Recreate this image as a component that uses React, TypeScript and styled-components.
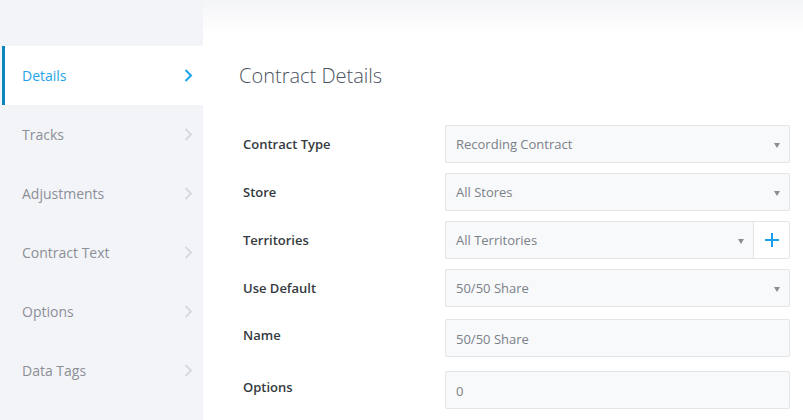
import styled, { createGlobalStyle, css } from 'styled-components';

const GlobalStyle = createGlobalStyle`
  html, body {
    margin: 0;
    padding: 0;
    background: #fff;
    font-family: 'Open Sans', 'Liberation Sans', sans-serif;
  }
  * {
    box-sizing: border-box;
  }
`;

const Page = styled.div`
  display: flex;
  width: 100%;
  height: 100vh;
  overflow: hidden;
  background: #fff;
`;

const Sidebar = styled.nav`
  width: 203px;
  flex-shrink: 0;
  background: #f3f4f8;
  padding-top: 46px;
  display: flex;
  flex-direction: column;
`;

const NavItem = styled.div<{ $active?: boolean }>`
  height: 59px;
  display: flex;
  align-items: center;
  justify-content: space-between;
  padding: 0 10px 0 22px;
  font-size: 14px;
  color: #8b8f97;
  ${props =>
    props.$active &&
    css`
      background: #fff;
      color: #25a3ea;
      box-shadow: inset 2px 0 0 #f3f4f8, inset 5px 0 0 #0b87bd;
    `};
`;

const Main = styled.main`
  flex: 1;
  padding: 62px 13px 0 36px;
  background: linear-gradient(to bottom, #f4f5f8 0px, #fbfbfc 22px, #fff 34px);
`;

const Title = styled.h1`
  margin: 0 0 35px;
  font-size: 20px;
  line-height: 28px;
  font-weight: 300;
  color: #4a5360;
`;

const Form = styled.div`
  display: flex;
  flex-direction: column;
`;

const Row = styled.div<{ $space: number }>`
  display: flex;
  align-items: center;
  margin-top: ${props => props.$space}px;
`;

const Label = styled.label<{ $shift?: number }>`
  width: 206px;
  flex-shrink: 0;
  padding-left: 4px;
  font-size: 13px;
  font-weight: 600;
  color: #343a40;
  position: relative;
  top: ${props => props.$shift || 0}px;
`;

const Control = styled.div`
  flex: 1;
  height: 38px;
  display: flex;
  border: 1px solid #e3e5e9;
  border-radius: 2px;
  background: #f8f9fb;
`;

const Value = styled.div<{ $text?: boolean }>`
  flex: 1;
  display: flex;
  align-items: center;
  justify-content: space-between;
  padding: ${props => (props.$text ? '2px' : '0')} 9px 0 10px;
  font-size: 13px;
  color: #7b8088;
`;

const Caret = styled.span`
  width: 0;
  height: 0;
  border-left: 3.5px solid transparent;
  border-right: 3.5px solid transparent;
  border-top: 5px solid #8a8d92;
  margin-top: 2px;
`;

const AddButton = styled.button`
  width: 36px;
  border: none;
  border-left: 1px solid #e3e5e9;
  background: #fff;
  padding: 0;
  display: flex;
  align-items: center;
  justify-content: center;
  cursor: pointer;
`;

const Chevron = ({ color }: { color: string }) => (
  <svg width="9" height="13" viewBox="0 0 9 13">
    <path d="M1.5 1 L7 6.5 L1.5 12" fill="none" stroke={color} strokeWidth="2" />
  </svg>
);

const NAV = ['Details', 'Tracks', 'Adjustments', 'Contract Text', 'Options', 'Data Tags'];

type FieldType = {
  label: string;
  value: string;
  select?: boolean;
  add?: boolean;
  space: number;
  shift?: number;
};

const FIELDS: FieldType[] = [
  { label: 'Contract Type', value: 'Recording Contract', select: true, space: 0 },
  { label: 'Store', value: 'All Stores', select: true, space: 10 },
  { label: 'Territories', value: 'All Territories', select: true, add: true, space: 10 },
  { label: 'Use Default', value: '50/50 Share', select: true, space: 10 },
  { label: 'Name', value: '50/50 Share', space: 12, shift: -3 },
  { label: 'Options', value: '0', space: 14, shift: -3 },
];

export default function App() {
  return (
    <Page>
      <GlobalStyle />
      <Sidebar>
        {NAV.map((item, i) => (
          <NavItem key={item} $active={i === 0}>
            {item}
            <Chevron color={i === 0 ? '#1ba2ea' : '#d6d9de'} />
          </NavItem>
        ))}
      </Sidebar>
      <Main>
        <Title>Contract Details</Title>
        <Form>
          {FIELDS.map(({ label, value, select, add, space, shift }) => (
            <Row key={label} $space={space}>
              <Label $shift={shift}>{label}</Label>
              <Control>
                <Value $text={!select}>
                  {value}
                  {select && <Caret />}
                </Value>
                {add && (
                  <AddButton>
                    <svg width="14" height="14" viewBox="0 0 14 14">
                      <path d="M7 0 V14 M0 7 H14" stroke="#1a9fe8" strokeWidth="2" />
                    </svg>
                  </AddButton>
                )}
              </Control>
            </Row>
          ))}
        </Form>
      </Main>
    </Page>
  );
}
